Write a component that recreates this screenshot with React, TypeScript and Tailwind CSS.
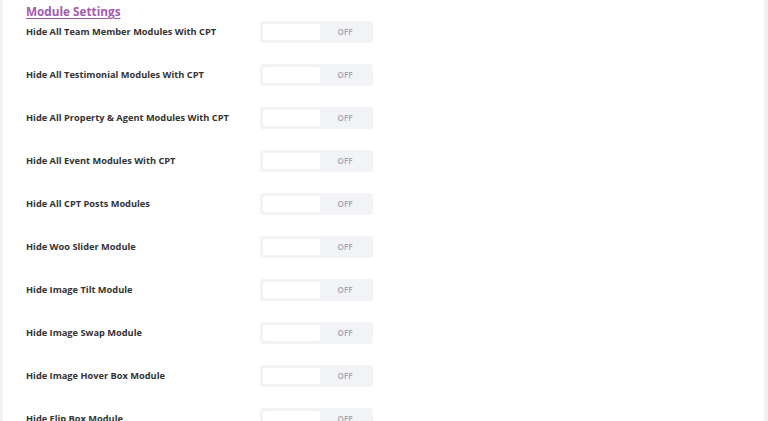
const rows = [
  "Hide All Team Member Modules With CPT",
  "Hide All Testimonial Modules With CPT",
  "Hide All Property & Agent Modules With CPT",
  "Hide All Event Modules With CPT",
  "Hide All CPT Posts Modules",
  "Hide Woo Slider Module",
  "Hide Image Tilt Module",
  "Hide Image Swap Module",
  "Hide Image Hover Box Module",
  "Hide Flip Box Module",
];

function Toggle() {
  return (
    <div className="flex h-[22px] w-[113px] items-center rounded-[3px] bg-[#f1f3f7] p-[3px]">
      <div className="h-[16px] w-[57px] rounded-[2px] bg-white" />
      <span className="flex-1 text-center text-[8px] font-semibold text-[#a0a6ae]">OFF</span>
    </div>
  );
}

export default function App() {
  return (
    <div
      className="flex h-[421px] w-[768px] overflow-hidden bg-white"
      style={{ fontFamily: '"Open Sans", sans-serif' }}
    >
      <div className="w-[3px] shrink-0 bg-[#f1f1f1]" />
      <div className="flex-1 pl-[23px] pt-[1px]">
        <h2 className="text-[11.75px] font-bold leading-[20px] text-[#a45ab0] underline decoration-1 underline-offset-2">
          Module Settings
        </h2>
        <div className="flex flex-col gap-[21px]">
          {rows.map((r) => (
            <div key={r} className="flex h-[22px] items-center">
              <span className="w-[234px] text-[9.25px] font-bold text-[#333]">{r}</span>
              <Toggle />
            </div>
          ))}
        </div>
      </div>
      <div className="w-[4px] shrink-0 bg-[#f1f1f1]" />
    </div>
  );
}
